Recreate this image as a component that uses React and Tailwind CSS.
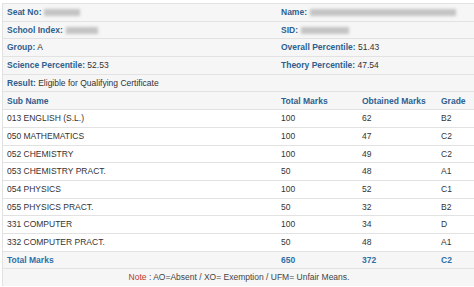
import React from "react";

const info = [
  [["Seat No:", "blur", 36], ["Name:", "blur", 146]],
  [["School Index:", "blur", 32], ["SID:", "blur", 48]],
  [["Group:", "A"], ["Overall Percentile:", "51.43"]],
  [["Science Percentile:", "52.53"], ["Theory Percentile:", "47.54"]],
];

const subjects = [
  ["013 ENGLISH (S.L.)", "100", "62", "B2"],
  ["050 MATHEMATICS", "100", "47", "C2"],
  ["052 CHEMISTRY", "100", "49", "C2"],
  ["053 CHEMISTRY PRACT.", "50", "48", "A1"],
  ["054 PHYSICS", "100", "52", "C1"],
  ["055 PHYSICS PRACT.", "50", "32", "B2"],
  ["331 COMPUTER", "100", "34", "D"],
  ["332 COMPUTER PRACT.", "50", "48", "A1"],
];

function Blur({ w }) {
  return <span className="inline-block h-[7px] ml-[3px] bg-[#c4c4c4] blur-[1.5px] align-middle" style={{ width: w }} />;
}

function Field({ label, value, w }) {
  return (
    <span>
      <span className="font-bold text-[#2f5f8f]">{label}</span>
      {value === "blur" ? <Blur w={w} /> : <span className="text-[#333]"> {value}</span>}
    </span>
  );
}

function Row({ gray, children }) {
  return (
    <div className={`flex items-center h-[17.7px] border-t border-[#e2e2e2] ${gray ? "bg-[#f6f6f6]" : "bg-white"}`}>
      {children}
    </div>
  );
}

export default function App() {
  return (
    <div className="w-[474px] h-[287px] overflow-hidden bg-white pt-[3px] pl-[2px]" style={{ fontFamily: '"Liberation Sans", Arial, sans-serif' }}>
      <div className="w-[490px] border-l border-[#e2e2e2] text-[8.5px] leading-none">
        {info.map((r, i) => (
          <Row key={i} gray>
            <div className="w-[274px] pl-[4px]"><Field label={r[0][0]} value={r[0][1]} w={r[0][2]} /></div>
            <div className="flex-1 pl-[4px]"><Field label={r[1][0]} value={r[1][1]} w={r[1][2]} /></div>
          </Row>
        ))}
        <Row gray>
          <div className="pl-[4px]"><Field label="Result:" value="Eligible for Qualifying Certificate" /></div>
        </Row>
        <Row gray>
          <div className="w-[274px] pl-[4px] font-bold text-[#2f5f8f]">Sub Name</div>
          <div className="w-[81px] pl-[4px] font-bold text-[#2f5f8f]">Total Marks</div>
          <div className="w-[79px] pl-[4px] font-bold text-[#2f5f8f]">Obtained Marks</div>
          <div className="flex-1 pl-[4px] font-bold text-[#2f5f8f]">Grade</div>
        </Row>
        {subjects.map((s) => (
          <Row key={s[0]}>
            <div className="w-[274px] pl-[4px] text-[#333]">{s[0]}</div>
            <div className="w-[81px] pl-[4px] text-[#333]">{s[1]}</div>
            <div className="w-[79px] pl-[4px] text-[#333]">{s[2]}</div>
            <div className="flex-1 pl-[4px] text-[#333]">{s[3]}</div>
          </Row>
        ))}
        <Row gray>
          <div className="w-[274px] pl-[4px] font-bold text-[#2f6fa8]">Total Marks</div>
          <div className="w-[81px] pl-[4px] font-bold text-[#2f6fa8]">650</div>
          <div className="w-[79px] pl-[4px] font-bold text-[#2f6fa8]">372</div>
          <div className="flex-1 pl-[4px] font-bold text-[#2f6fa8]">C2</div>
        </Row>
        <Row gray>
          <div className="w-[472px] text-center text-[#444]">
            <span className="text-[#c0392b]">Note</span> : AO=Absent / XO= Exemption / UFM= Unfair Means.
          </div>
        </Row>
      </div>
    </div>
  );
}
